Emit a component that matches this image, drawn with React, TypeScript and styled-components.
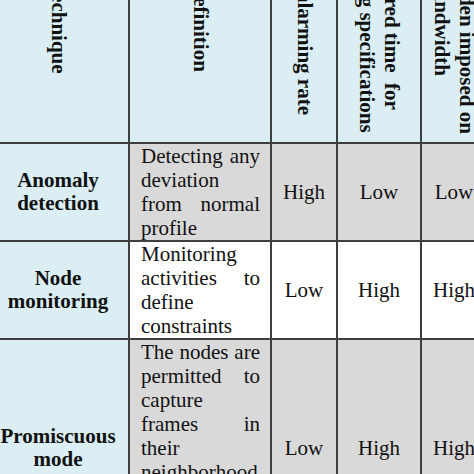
import React from "react";
import styled, { createGlobalStyle } from "styled-components";

type Level = "High" | "Low";

type Row = {
	technique: string[];
	definition: string;
	shade: "gray" | "white";
	alarm: Level;
	time: Level;
	burden: Level;
};

const rows: Row[] = [
	{
		technique: ["Anomaly", "detection"],
		definition: "Detecting any deviation from normal profile",
		shade: "gray",
		alarm: "High",
		time: "Low",
		burden: "Low",
	},
	{
		technique: ["Node", "monitoring"],
		definition: "Monitoring activities to define constraints",
		shade: "white",
		alarm: "Low",
		time: "High",
		burden: "High",
	},
	{
		technique: ["Promiscuous", "mode"],
		definition:
			"The nodes are permitted to capture frames in their neighborhood even if they are not the destination",
		shade: "gray",
		alarm: "Low",
		time: "High",
		burden: "High",
	},
];

const App = () => {
	return (
		<>
			<GlobalStyle />
			<Viewport>
				<Table>
					<colgroup>
						<col style={{ width: 142 }} />
						<col style={{ width: 142 }} />
						<col style={{ width: 66 }} />
						<col style={{ width: 84 }} />
						<col style={{ width: 66 }} />
					</colgroup>
					<thead>
						<tr>
							<HeadCell>
								<VerticalText>Technique</VerticalText>
							</HeadCell>
							<HeadCell>
								<VerticalText>Definition</VerticalText>
							</HeadCell>
							<HeadCell>
								<VerticalText>False alarming rate</VerticalText>
							</HeadCell>
							<HeadCell>
								<VerticalText>
									Required time&nbsp; for designing specifications
								</VerticalText>
							</HeadCell>
							<HeadCell>
								<VerticalText>The burden imposed on bandwidth</VerticalText>
							</HeadCell>
						</tr>
					</thead>
					<tbody>
						{rows.map((row) => (
							<tr key={row.technique.join(" ")}>
								<TechniqueCell>
									{row.technique[0]}
									<br />
									{row.technique[1]}
								</TechniqueCell>
								<DefinitionCell $shade={row.shade}>{row.definition}</DefinitionCell>
								<ValueCell $shade={row.shade}>{row.alarm}</ValueCell>
								<ValueCell $shade={row.shade}>{row.time}</ValueCell>
								<ValueCell $shade={row.shade}>{row.burden}</ValueCell>
							</tr>
						))}
					</tbody>
				</Table>
			</Viewport>
		</>
	);
};

export default App;

// Styled Components
const GlobalStyle = createGlobalStyle`
	html, body {
		margin: 0;
		padding: 0;
		background: #ffffff;
	}
`;

const Viewport = styled.div`
	width: 474px;
	height: 474px;
	overflow: hidden;
	background: #ffffff;
	font-family: "Liberation Serif", "Times New Roman", serif;
	color: #111111;
`;

const Table = styled.table`
	border-collapse: collapse;
	table-layout: fixed;
	width: 500px;
	margin-top: -93px;
	margin-left: -14px;
	font-size: 21px;
	line-height: 24px;

	td,
	th {
		border: 2px solid #3f3f3f;
	}
`;

const HeadCell = styled.th`
	height: 233px;
	padding: 0;
	background-color: #daeef3; /* light blue header shading */
	vertical-align: top;
	font-weight: 700;
`;

const VerticalText = styled.div`
	writing-mode: vertical-rl;
	height: 230px;
	margin: 3px auto 0;
	text-align: center;
	line-height: 25px;
`;

const TechniqueCell = styled.td`
	padding: 0 4px;
	background-color: #daeef3;
	text-align: center;
	vertical-align: middle;
	font-weight: 700;
	line-height: 23px;
`;

const DefinitionCell = styled.td<{ $shade: "gray" | "white" }>`
	padding: 0 10px 0 11px;
	background-color: ${({ $shade }) => ($shade === "gray" ? "#d9d9d9" : "#ffffff")};
	text-align: justify;
	vertical-align: top;
`;

const ValueCell = styled.td<{ $shade: "gray" | "white" }>`
	padding: 0;
	background-color: ${({ $shade }) => ($shade === "gray" ? "#d9d9d9" : "#ffffff")};
	text-align: center;
	vertical-align: middle;
`;
